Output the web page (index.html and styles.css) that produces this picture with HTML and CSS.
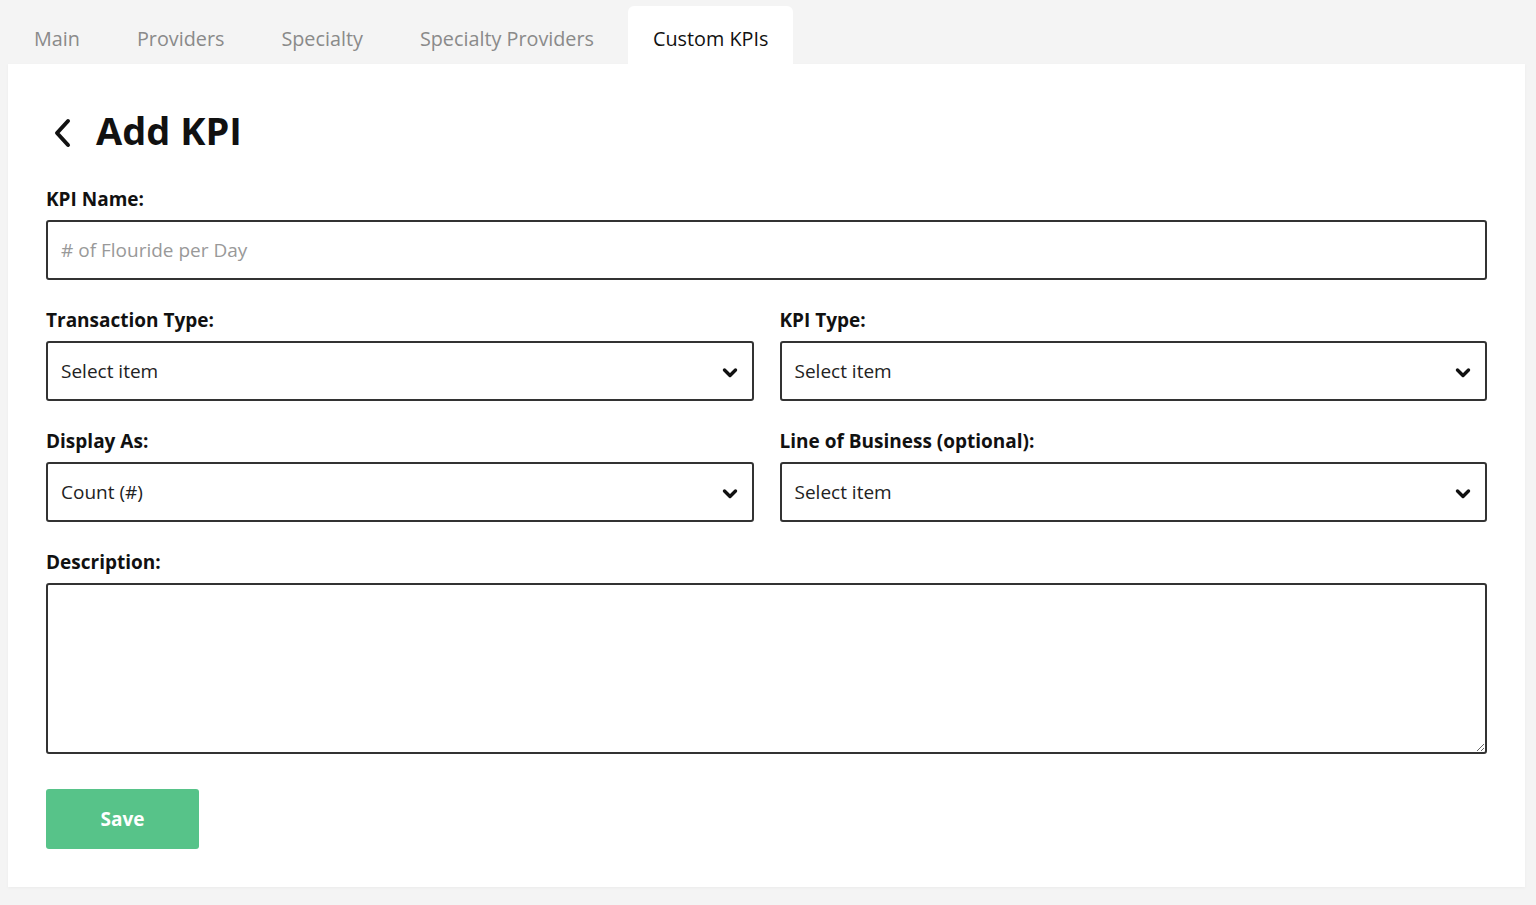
FILE: index.html
```html
<!DOCTYPE html>
<html lang="en">
<head>
    <meta charset="UTF-8">
    <meta name="viewport" content="width=device-width, initial-scale=1.0">
    <title>Add KPI</title>
    <link rel="stylesheet" href="styles.css">
</head>
<body>
    <nav class="tabs">
        <div class="tab">Main</div>
        <div class="tab">Providers</div>
        <div class="tab">Specialty</div>
        <div class="tab">Specialty Providers</div>
        <div class="tab active">Custom KPIs</div>
    </nav>

    <div class="card">
        <div class="title-row">
            <svg class="back" width="20" height="30" viewBox="0 0 20 30">
                <path d="M16 3 L5 15 L16 27" fill="none" stroke="#111" stroke-width="4" stroke-linecap="round" stroke-linejoin="round"/>
            </svg>
            <h1>Add KPI</h1>
        </div>

        <div class="field">
            <label for="kpi-name">KPI Name:</label>
            <input type="text" id="kpi-name" placeholder="# of Flouride per Day">
        </div>

        <div class="row">
            <div class="field">
                <label>Transaction Type:</label>
                <div class="select">
                    <span>Select item</span>
                    <svg width="16" height="12" viewBox="0 0 16 12"><path d="M2.5 3 L8 8.5 L13.5 3" fill="none" stroke="#111" stroke-width="3.4" stroke-linecap="round" stroke-linejoin="round"/></svg>
                </div>
            </div>
            <div class="field">
                <label>KPI Type:</label>
                <div class="select">
                    <span>Select item</span>
                    <svg width="16" height="12" viewBox="0 0 16 12"><path d="M2.5 3 L8 8.5 L13.5 3" fill="none" stroke="#111" stroke-width="3.4" stroke-linecap="round" stroke-linejoin="round"/></svg>
                </div>
            </div>
        </div>

        <div class="row">
            <div class="field">
                <label>Display As:</label>
                <div class="select">
                    <span>Count (#)</span>
                    <svg width="16" height="12" viewBox="0 0 16 12"><path d="M2.5 3 L8 8.5 L13.5 3" fill="none" stroke="#111" stroke-width="3.4" stroke-linecap="round" stroke-linejoin="round"/></svg>
                </div>
            </div>
            <div class="field">
                <label>Line of Business (optional):</label>
                <div class="select">
                    <span>Select item</span>
                    <svg width="16" height="12" viewBox="0 0 16 12"><path d="M2.5 3 L8 8.5 L13.5 3" fill="none" stroke="#111" stroke-width="3.4" stroke-linecap="round" stroke-linejoin="round"/></svg>
                </div>
            </div>
        </div>

        <div class="field">
            <label for="description">Description:</label>
            <textarea id="description"></textarea>
        </div>

        <button class="save">Save</button>
    </div>
</body>
</html>
```

FILE: styles.css
```css
body {
    font-family: 'Open Sans', 'Noto Sans', sans-serif;
    background-color: #f4f4f4;
    color: #111;
    margin: 0;
    padding: 6px 11px 18px 8px;
}

.tabs {
    display: flex;
    gap: 7px;
    height: 58px;
    padding-left: 1px;
}

.tab {
    padding: 6px 25px 0;
    display: flex;
    align-items: center;
    font-size: 19.8px;
    color: #8a8a8a;
    border-radius: 6px 6px 0 0;
    box-sizing: border-box;
}

.tab.active {
    background-color: #fff;
    color: #111;
    margin-left: 2px;
}

.card {
    background-color: #fff;
    padding: 44px 38px 38px;
    box-shadow: 0 1px 3px rgba(0, 0, 0, 0.04);
}

.title-row {
    display: flex;
    align-items: center;
    gap: 24px;
    margin-bottom: 33px;
    padding-left: 6px;
}

.back {
    display: block;
    margin-top: 3px;
}

h1 {
    margin: 0;
    font-size: 38px;
    line-height: 46px;
    font-weight: 700;
    position: relative;
    top: -1px;
}

.field {
    margin-bottom: 28px;
}

.field label {
    display: block;
    font-size: 19px;
    font-weight: 700;
    line-height: 24px;
    margin-bottom: 9px;
}

.row {
    display: grid;
    grid-template-columns: 1fr 1fr;
    gap: 26px;
}

input, .select, textarea {
    width: 100%;
    height: 60px;
    box-sizing: border-box;
    border: 2px solid #333;
    border-radius: 3px;
    padding: 0 13px;
    font-family: inherit;
    font-size: 19px;
    color: #222;
    background-color: #fff;
}

input::placeholder {
    color: #999;
}

.select {
    display: flex;
    align-items: center;
    justify-content: space-between;
    padding-right: 14px;
}

.select svg {
    display: block;
    margin-top: 3px;
}

textarea {
    height: 171px;
    padding: 13px;
    display: block;
}

.save {
    background-color: #57c389;
    color: #fff;
    border: none;
    border-radius: 3px;
    width: 153px;
    height: 60px;
    font-family: inherit;
    font-size: 19px;
    font-weight: 700;
    margin-top: 7px;
    cursor: pointer;
}
```
